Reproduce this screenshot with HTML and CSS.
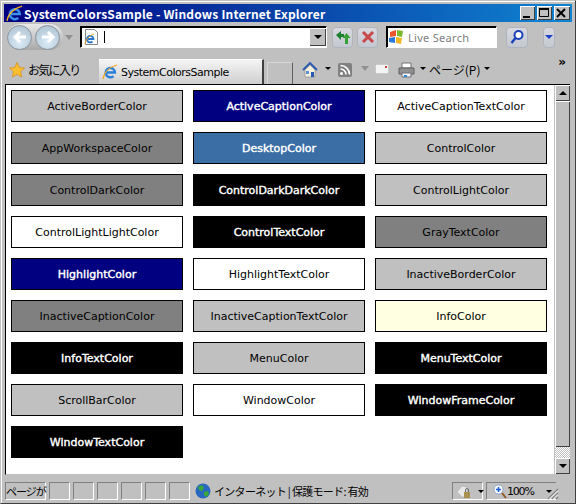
FILE: index.html
```html
<!DOCTYPE html>
<html lang="ja">

<head>
    <title>SystemColorsSample - Windows Internet Explorer</title>
    <link rel="stylesheet" href="styles.css">
</head>

<body>

    <div class="window">

        <div class="titlebar">
            <svg class="title-icon" width="17" height="17" viewBox="0 0 16 16">
                <path d="M4.500 8.500h8.500a4.700 4.700 0 1 0-1.500 3.600" fill="none" stroke="#3a90e8" stroke-width="2.400"/>
                <path d="M1 15C2 8 8 3 15 1" fill="none" stroke="#f0b020" stroke-width="1.300"/>
            </svg>
            <span class="title-text">SystemColorsSample - Windows Internet Explorer</span>
            <div class="caption-buttons">
                <div class="caption-btn"><svg width="15" height="14" viewBox="0 0 15 14"><path d="M3 10h7v2H3z" fill="#000"/></svg></div>
                <div class="caption-btn"><svg width="15" height="14" viewBox="0 0 15 14"><path d="M2.500 2.500h9v8h-9z" fill="none" stroke="#000"/><path d="M2 2h10v2H2z" fill="#000"/></svg></div>
                <div class="caption-btn close"><svg width="15" height="14" viewBox="0 0 15 14"><path d="M3 3l8 8M11 3l-8 8" stroke="#000" stroke-width="2"/></svg></div>
            </div>
        </div>

        <div class="navbar">
            <div class="nav-pill">
                <div class="nav-round">
                    <svg width="20" height="20" viewBox="0 0 20 20"><path d="M16 10H6M10 5l-5 5 5 5" fill="none" stroke="#fff" stroke-width="3"/></svg>
                </div>
                <div class="nav-round">
                    <svg width="20" height="20" viewBox="0 0 20 20"><path d="M4 10h10M10 5l5 5-5 5" fill="none" stroke="#fff" stroke-width="3"/></svg>
                </div>
            </div>
            <span class="arrow-hollow"></span>
            <div class="address">
                <svg class="page-icon" width="16" height="16" viewBox="0 0 16 16">
                    <path d="M2.500.5h9l3 3v12h-12z" fill="#fff" stroke="#888"/>
                    <path d="M4 10h6.500a3.300 3.300 0 1 0-1 2.500" fill="none" stroke="#2a78d0" stroke-width="1.800"/>
                    <path d="M2 15C3 10 7 6 11 5" fill="none" stroke="#f0a020"/>
                </svg>
                <span class="caret"></span>
                <div class="address-drop"><span class="arrow-black"></span></div>
            </div>
            <div class="tool-btn refresh">
                <svg width="16" height="16" viewBox="0 0 16 16">
                    <path d="M1 6l5-4v3h3v3H6v3z" fill="#1f7f30"/>
                    <path d="M10 15V9H7.500L11.500 4l4 5H13v6z" fill="#35a035"/>
                </svg>
            </div>
            <div class="tool-btn stop">
                <svg width="14" height="14" viewBox="0 0 14 14"><path d="M2 2l10 10M12 2L2 12" stroke="#c84848" stroke-width="3"/></svg>
            </div>
            <div class="search-box">
                <svg width="17" height="16" viewBox="0 0 17 16">
                    <path d="M2 3l6-2v6l-6 1z" fill="#e8562a"/>
                    <path d="M9 1l6 1-1 6-5-1z" fill="#7cb82a"/>
                    <path d="M1 9l6-1v6l-6-1z" fill="#2a78d8"/>
                    <path d="M8 8l6 1-1 6-5-1z" fill="#f0b820"/>
                </svg>
                <span class="search-text">Live Search</span>
            </div>
            <div class="tool-btn search-btn">
                <svg width="16" height="16" viewBox="0 0 16 16"><circle cx="9.500" cy="6" r="4" fill="#fff" stroke="#1840b8" stroke-width="2"/><path d="M6.500 9L2.500 14" stroke="#1840b8" stroke-width="2.400"/></svg>
            </div>
            <div class="tool-btn more-btn"><span class="arrow-blue"></span></div>
        </div>

        <div class="tabbar">
            <svg class="star" width="16" height="16" viewBox="0 0 16 16"><path d="M8 .5l2.300 5 5.200.6-3.900 3.500 1.100 5.400L8 12.300 3.300 15l1.100-5.400L.5 6.100l5.200-.6z" fill="#f8c030" stroke="#d88a10" stroke-width=".7"/></svg>
            <span class="fav-label">お気に入り</span>
            <div class="tab">
                <svg width="16" height="16" viewBox="0 0 16 16">
                    <path d="M4.500 8.500h8.500a4.700 4.700 0 1 0-1.500 3.600" fill="none" stroke="#2a80d8" stroke-width="2.400"/>
                    <path d="M1 15C2 8 8 3 15 1" fill="none" stroke="#f0a820" stroke-width="1.300"/>
                </svg>
                <span>SystemColorsSample</span>
            </div>
            <div class="tab-new"></div>
            <svg class="home-icon" width="16" height="17" viewBox="0 0 16 17">
                <path d="M1 9l7-7 7 7" fill="none" stroke="#2858b0" stroke-width="1.800"/>
                <path d="M3 9l5-5 5 5v7H3z" fill="#f4f0e0" stroke="#808080" stroke-width=".6"/>
                <path d="M9 11h3v5H9z" fill="#2858b0"/>
                <path d="M4 10h3v3H4z" fill="#6090d0"/>
            </svg>
            <span class="arrow-black home-drop"></span>
            <svg class="feed-icon" width="14" height="14" viewBox="0 0 14 14">
                <rect width="14" height="14" rx="2" fill="#808080"/>
                <circle cx="3.500" cy="10.500" r="1.500" fill="#fff"/>
                <path d="M2.500 6a5.500 5.500 0 0 1 5.500 5.500M2.500 2.500a9 9 0 0 1 9 9" fill="none" stroke="#fff" stroke-width="1.600"/>
            </svg>
            <span class="arrow-hollow feed-drop"></span>
            <svg class="mail-icon" width="14" height="10" viewBox="0 0 14 10"><rect width="14" height="10" fill="#f4f4f4" stroke="#a0a0a0"/><rect x="10" y="2" width="2" height="2" fill="#c04040"/></svg>
            <svg class="print-icon" width="17" height="16" viewBox="0 0 17 16">
                <path d="M4 1h9v5H4z" fill="#fff" stroke="#707070"/>
                <path d="M1 6h15v6H1z" fill="#909090" stroke="#606060"/>
                <path d="M4 11h9v4H4z" fill="#f0f4ff" stroke="#707070"/>
                <path d="M6 13h3v2H6z" fill="#3088d8"/>
            </svg>
            <span class="arrow-black print-drop"></span>
            <span class="page-menu">ページ(P)</span>
            <span class="arrow-black page-drop"></span>
            <span class="chevrons">»</span>
        </div>

        <div class="viewport">
            <div class="content">
                <div class="swatch gray">ActiveBorderColor</div>
                <div class="swatch navy">ActiveCaptionColor</div>
                <div class="swatch white">ActiveCaptionTextColor</div>
                <div class="swatch dark">AppWorkspaceColor</div>
                <div class="swatch desktop">DesktopColor</div>
                <div class="swatch gray">ControlColor</div>
                <div class="swatch dark">ControlDarkColor</div>
                <div class="swatch black">ControlDarkDarkColor</div>
                <div class="swatch gray">ControlLightColor</div>
                <div class="swatch white">ControlLightLightColor</div>
                <div class="swatch black">ControlTextColor</div>
                <div class="swatch dark">GrayTextColor</div>
                <div class="swatch navy">HighlightColor</div>
                <div class="swatch white">HighlightTextColor</div>
                <div class="swatch gray">InactiveBorderColor</div>
                <div class="swatch dark">InactiveCaptionColor</div>
                <div class="swatch gray">InactiveCaptionTextColor</div>
                <div class="swatch info">InfoColor</div>
                <div class="swatch black">InfoTextColor</div>
                <div class="swatch gray">MenuColor</div>
                <div class="swatch black">MenuTextColor</div>
                <div class="swatch gray">ScrollBarColor</div>
                <div class="swatch white">WindowColor</div>
                <div class="swatch black">WindowFrameColor</div>
                <div class="swatch black">WindowTextColor</div>
            </div>
            <div class="scrollbar">
                <div class="scroll-btn"><span class="arrow-up"></span></div>
                <div class="scroll-thumb"></div>
                <div class="scroll-track"></div>
                <div class="scroll-btn"><span class="arrow-down"></span></div>
            </div>
        </div>

        <div class="statusbar">
            <div class="status-cell status-msg">ページが</div>
            <div class="status-cell blank"></div>
            <div class="status-cell blank"></div>
            <div class="status-cell blank"></div>
            <div class="status-cell blank"></div>
            <div class="status-cell blank"></div>
            <div class="status-cell blank"></div>
            <div class="status-cell status-zone">
                <svg width="16" height="16" viewBox="0 0 16 16">
                    <circle cx="8" cy="8" r="7.500" fill="#2868c0"/>
                    <path d="M3 4l4-2 2 3-2 3-3-1zM9 9l4-1 1 3-3 3-2-2z" fill="#38a838"/>
                </svg>
                <span>インターネット | 保護モード: 有効</span>
            </div>
            <div class="status-cell status-lock">
                <svg width="16" height="15" viewBox="0 0 16 15">
                    <path d="M1 8l5-6 5 1v10H6z" fill="#e8e8e8" stroke="#a8a8a8" stroke-width=".6"/>
                    <path d="M8 8h6v6H8z" fill="#a89050"/>
                    <path d="M9.500 8V6a1.500 1.500 0 0 1 3 0v2" fill="none" stroke="#707070"/>
                </svg>
                <span class="arrow-black"></span>
            </div>
            <div class="status-cell status-zoom">
                <svg width="14" height="15" viewBox="0 0 14 15">
                    <circle cx="5.500" cy="5.500" r="4.500" fill="#fff" stroke="#90a8d0"/>
                    <path d="M3 5.500h5M5.500 3v5" stroke="#1860d0" stroke-width="1.600"/>
                    <path d="M9 9l4 5" stroke="#905820" stroke-width="2"/>
                </svg>
                <span class="zoom-text">100%</span>
                <span class="arrow-black"></span>
            </div>
            <svg class="grip" width="12" height="12" viewBox="0 0 12 12">
                <path d="M11 1L1 11M11 5L5 11M11 9l-2 2" stroke="#808080" stroke-width="1.200"/>
                <path d="M11 2.500L2.500 11M11 6.500L6.500 11" stroke="#fff"/>
            </svg>
        </div>

    </div>

</body>

</html>
```

FILE: styles.css
```css
* {
    padding: 0;
    margin: 0;
    box-sizing: border-box;
}

body {
    width: 576px;
    height: 504px;
    overflow: hidden;
    background: #c0c0c0;
}

svg {
    display: block;
    flex-shrink: 0;
}

.window {
    width: 576px;
    height: 504px;
    display: flex;
    flex-direction: column;
    padding: 4px 4px 3px;
    background: #c0c0c0;
    border: 1px solid #404040;
    border-top-color: #c0c0c0;
    border-left-color: #c0c0c0;
    box-shadow: inset 1px 1px 0 #fff;
    font-family: "Noto Sans CJK JP", "DejaVu Sans", sans-serif;
    color: #000;
}

/* title bar */
.titlebar {
    height: 18px;
    margin: -1px -1px 0 -1px;
    display: flex;
    align-items: center;
    padding: 0 2px;
    background: linear-gradient(90deg, #000080, #1084d0);
    color: #fff;
}

.title-icon {
    margin-right: 1px;
}

.title-text {
    font-size: 12px;
    font-weight: 700;
    letter-spacing: 0.18px;
    white-space: nowrap;
}

.caption-buttons {
    margin-left: auto;
    display: flex;
    gap: 2px;
}

.caption-btn {
    width: 15px;
    height: 14px;
    background: #c0c0c0;
    box-shadow: inset 1px 1px 0 #fff, inset -1px -1px 0 #404040;
}

.close {
    width: 16px;
}

/* nav row */
.navbar {
    height: 30px;
    display: flex;
    align-items: center;
    padding-left: 2px;
}

.nav-pill {
    width: 56px;
    height: 26px;
    display: flex;
    align-items: center;
    gap: 3px;
    border-radius: 13px;
    background: linear-gradient(#e8e8e8, #a8a8a8);
}

.nav-round {
    width: 25px;
    height: 25px;
    display: flex;
    align-items: center;
    justify-content: center;
    border-radius: 50%;
    border: 1px solid #8a94a0;
    background: radial-gradient(circle at 50% 70%, #dcecf8, #a8bccc);
}

.arrow-hollow {
    width: 0;
    height: 0;
    margin-left: 2px;
    border-left: 4px solid transparent;
    border-right: 4px solid transparent;
    border-top: 5px solid #909090;
}

.arrow-black {
    display: inline-block;
    width: 0;
    height: 0;
    border-left: 3px solid transparent;
    border-right: 3px solid transparent;
    border-top: 3px solid #000;
}

.arrow-up {
    display: inline-block;
    width: 0;
    height: 0;
    border-left: 4px solid transparent;
    border-right: 4px solid transparent;
    border-bottom: 4px solid #000;
}

.arrow-down {
    display: inline-block;
    width: 0;
    height: 0;
    border-left: 4px solid transparent;
    border-right: 4px solid transparent;
    border-top: 4px solid #000;
}

.arrow-blue {
    display: inline-block;
    width: 0;
    height: 0;
    border-left: 4px solid transparent;
    border-right: 4px solid transparent;
    border-top: 4px solid #1840c8;
}

.address {
    width: 247px;
    height: 22px;
    margin-left: 7px;
    display: flex;
    align-items: center;
    background: #fff;
    border: 1px solid;
    border-color: #000 #fff #fff #000;
    padding-left: 2px;
    box-shadow: inset 0 1px 0 #000, inset 1px 0 0 #000;
}

.caret {
    width: 1px;
    height: 12px;
    margin-left: 5px;
    background: #000;
}

.address-drop {
    width: 17px;
    height: 18px;
    margin-left: auto;
    display: flex;
    align-items: center;
    justify-content: center;
    background: #c0c0c0;
    box-shadow: inset 1px 1px 0 #fff, inset -1px -1px 0 #404040;
}

.address-drop .arrow-black {
    border-left-width: 4px;
    border-right-width: 4px;
    border-top-width: 4px;
}

.tool-btn {
    height: 21px;
    display: flex;
    align-items: center;
    justify-content: center;
    border-radius: 4px;
    background: linear-gradient(#d8d8e0, #c4c8d0);
    border: 1px solid #b0b4bc;
}

.refresh {
    width: 21px;
    margin-left: 5px;
}

.stop {
    width: 21px;
    margin-left: 4px;
}

.search-box {
    width: 111px;
    height: 22px;
    margin-left: 8px;
    display: flex;
    align-items: center;
    gap: 3px;
    padding-left: 1px;
    background: #fff;
    border: 1px solid;
    border-color: #000 #fff #fff #000;
    box-shadow: inset 0 1px 0 #000, inset 1px 0 0 #000;
}

.search-text {
    font-family: "Noto Sans", sans-serif;
    font-size: 11px;
    color: #808080;
    letter-spacing: 0.3px;
}

.search-btn {
    width: 22px;
    margin-left: 9px;
}

.more-btn {
    width: 12px;
    margin-left: 15px;
}

/* tab row */
.tabbar {
    height: 32px;
    display: flex;
    align-items: center;
    padding-left: 4px;
    font-size: 11px;
}

.star {
    margin-top: 4px;
}

.fav-label {
    width: 52px;
    margin-left: 3px;
    margin-top: 2px;
    font-size: 12px;
    letter-spacing: -1.700px;
    white-space: nowrap;
}

.tab {
    width: 165px;
    height: 25px;
    margin-left: 19px;
    margin-top: 7px;
    display: flex;
    align-items: center;
    gap: 3px;
    padding-left: 3px;
    font-family: "DejaVu Sans", sans-serif;
    font-size: 11px;
    letter-spacing: -0.5px;
    background: linear-gradient(#f4f4f4, #cfcfcf);
    border-top: 1px solid #fff;
    border-right: 2px solid #404040;
}

.tab-new {
    width: 26px;
    height: 22px;
    margin-left: 3px;
    margin-top: 10px;
    border: 1px solid #d8d8d8;
    border-right-color: #606060;
    border-bottom: none;
}

.home-icon {
    margin-left: 9px;
    margin-top: 2px;
}

.home-drop {
    margin-left: 7px;
}

.feed-icon {
    margin-left: 7px;
    margin-top: 4px;
}

.feed-drop {
    margin-left: 9px;
}

.mail-icon {
    margin-left: 6px;
    margin-top: 2px;
}

.print-icon {
    margin-left: 9px;
    margin-top: 3px;
}

.print-drop {
    margin-left: 5px;
}

.page-menu {
    margin-left: 3px;
    margin-top: 2px;
    width: 52px;
    font-size: 12px;
    letter-spacing: 0;
    white-space: nowrap;
}

.page-drop {
    margin-left: 3px;
}

.chevrons {
    margin-left: auto;
    margin-right: 5px;
    margin-top: -12px;
    font-family: "DejaVu Sans", sans-serif;
    font-size: 12px;
    font-weight: 700;
}

/* page area */
.viewport {
    height: 391px;
    display: flex;
    margin-right: 1px;
    background: #fff;
    border-top: 1px solid #000;
    border-left: 1px solid #000;
    border-bottom: 1px solid #c0c0c0;
}

.content {
    flex: 1;
    padding: 5px 0 0 5px;
    display: grid;
    grid-template-columns: repeat(3, 172px);
    grid-auto-rows: 32px;
    gap: 10px;
    align-content: start;
    font-family: "DejaVu Sans", sans-serif;
    font-size: 11px;
}

.swatch {
    display: flex;
    align-items: center;
    justify-content: center;
    border: 1px solid #000;
}

.gray {
    background: #c0c0c0;
    color: #000;
}

.dark {
    background: #808080;
    color: #000;
}

.navy {
    background: #000080;
    color: #fff;
    -webkit-text-stroke: 0.4px #fff;
}

.white {
    background: #fff;
    color: #000;
}

.black {
    background: #000;
    color: #fff;
    -webkit-text-stroke: 0.4px #fff;
}

.desktop {
    background: #3a6ea5;
    color: #fff;
    -webkit-text-stroke: 0.4px #fff;
}

.info {
    background: #ffffe1;
    color: #000;
}

.scrollbar {
    width: 16px;
    display: flex;
    flex-direction: column;
    border-left: 1px solid #c0c0c0;
}

.scroll-btn {
    height: 16px;
    display: flex;
    align-items: center;
    justify-content: center;
    background: #c0c0c0;
    box-shadow: inset 1px 1px 0 #fff, inset -1px -1px 0 #404040;
}

.scroll-thumb {
    height: 346px;
    background: #c0c0c0;
    box-shadow: inset 1px 1px 0 #fff, inset -1px -1px 0 #404040;
}

.scroll-track {
    flex: 1;
    background: repeating-conic-gradient(#c0c0c0 0 25%, #fff 0 50%) 0 0 / 2px 2px;
}

/* status bar */
.statusbar {
    height: 18px;
    margin-top: 7px;
    display: flex;
    align-items: center;
    gap: 3px;
    font-size: 12px;
}

.status-cell {
    height: 18px;
    display: flex;
    align-items: center;
    border: 1px solid;
    border-color: #808080 #fff #fff #808080;
    white-space: nowrap;
}

.status-msg {
    width: 41px;
    letter-spacing: -1px;
    font-size: 11px;
}

.blank {
    width: 21px;
}

.status-zone {
    width: 256px;
    gap: 3px;
    padding-left: 2px;
    border: none;
    font-size: 11px;
    letter-spacing: -0.7px;
}

.status-lock {
    width: 31px;
    gap: 6px;
    padding-left: 3px;
}

.status-zoom {
    width: 70px;
    padding-left: 6px;
    border-right: none;
}

.zoom-text {
    width: 39px;
    font-family: "DejaVu Sans", sans-serif;
    font-size: 11px;
    letter-spacing: -1.200px;
}

.grip {
    margin-left: -12px;
    align-self: flex-end;
}
```
